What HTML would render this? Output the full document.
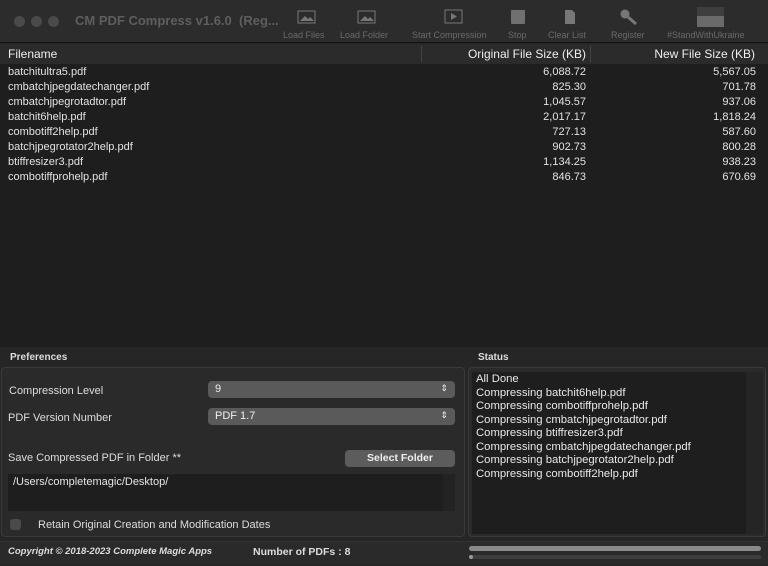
<!DOCTYPE html>
<html><head><style>
*{margin:0;padding:0;box-sizing:border-box}
body{width:768px;height:566px;background:#262626;font-family:"Liberation Sans",sans-serif;color:#dedede;position:relative;overflow:hidden}
.abs{position:absolute}
.title{left:0;top:0;width:768px;height:43px;background:#2c2c2c;border-bottom:1px solid #111}
.dot{width:11px;height:11px;border-radius:50%;background:#4a4a4a;top:16px}
.tb{font-size:9px;color:#6a6a6a;top:30px;text-align:center}
.hdr{left:0;top:44px;width:768px;height:20px;background:#2b2b2b;font-size:12px;color:#eee}
.tbl{left:0;top:64px;width:768px;height:283px;background:#1e1e1e}
.row{position:absolute;left:0;width:768px;height:15px;font-size:11px;color:#e2e2e2}
.row span{position:absolute;top:1px}
.box{border:1px solid #3a3a3a;border-radius:4px;background:#2a2a2a}
.sel{background:#5a5a5a;border-radius:4px;height:17px;font-size:11px;color:#eee;padding:2px 7px}
.lbl{font-size:11px;color:#ddd}
</style></head><body>
<div class="abs title"></div>
<div class="abs dot" style="left:14px"></div>
<div class="abs dot" style="left:31px"></div>
<div class="abs dot" style="left:48px"></div>
<div class="abs" style="left:75px;top:13px;font-size:13px;font-weight:bold;color:#5e5e5e">CM PDF Compress v1.6.0&nbsp; (Reg...</div>
<svg class="abs" style="left:297px;top:10px" width="20" height="15"><rect x="1" y="1" width="17" height="12" fill="none" stroke="#777"/><path d="M3 11 L8 6 L11 9 L13 7 L17 11Z" fill="#777"/></svg>
<svg class="abs" style="left:357px;top:10px" width="20" height="15"><rect x="1" y="1" width="17" height="12" fill="none" stroke="#777"/><path d="M3 11 L8 6 L11 9 L13 7 L17 11Z" fill="#777"/></svg>
<svg class="abs" style="left:444px;top:9px" width="20" height="16"><rect x="1" y="1" width="17" height="13" fill="none" stroke="#777"/><path d="M7 4 L13 7.5 L7 11Z" fill="#777"/></svg>
<div class="abs" style="left:511px;top:10px;width:14px;height:14px;background:#707070;border-radius:1px"></div>
<svg class="abs" style="left:564px;top:9px" width="12" height="16"><path d="M1 1 H8 L11 4 V15 H1Z" fill="#777"/></svg>
<svg class="abs" style="left:619px;top:8px" width="20" height="18"><circle cx="6" cy="6" r="4.5" fill="#777"/><path d="M9 9 L17 16" stroke="#777" stroke-width="3"/></svg>
<div class="abs" style="left:697px;top:7px;width:27px;height:9px;background:#3e3e3e"></div>
<div class="abs" style="left:697px;top:16px;width:27px;height:11px;background:#6a6a6a"></div>
<div class="abs tb" style="left:283px">Load Files</div>
<div class="abs tb" style="left:340px">Load Folder</div>
<div class="abs tb" style="left:412px">Start Compression</div>
<div class="abs tb" style="left:508px">Stop</div>
<div class="abs tb" style="left:548px">Clear List</div>
<div class="abs tb" style="left:611px">Register</div>
<div class="abs tb" style="left:667px">#StandWithUkraine</div>

<div class="abs hdr">
<span class="abs" style="left:8px;top:3px">Filename</span>
<div class="abs" style="left:421px;top:2px;width:1px;height:16px;background:#444"></div>
<span class="abs" style="right:182px;top:3px">Original File Size (KB)</span>
<div class="abs" style="left:590px;top:2px;width:1px;height:16px;background:#444"></div>
<span class="abs" style="right:13px;top:3px">New File Size (KB)</span>
</div>
<div class="abs tbl">
<div class="row" style="top:1px"><span style="left:8px">batchitultra5.pdf</span><span style="right:182px">6,088.72</span><span style="right:12px">5,567.05</span></div>
<div class="row" style="top:16px"><span style="left:8px">cmbatchjpegdatechanger.pdf</span><span style="right:182px">825.30</span><span style="right:12px">701.78</span></div>
<div class="row" style="top:31px"><span style="left:8px">cmbatchjpegrotadtor.pdf</span><span style="right:182px">1,045.57</span><span style="right:12px">937.06</span></div>
<div class="row" style="top:46px"><span style="left:8px">batchit6help.pdf</span><span style="right:182px">2,017.17</span><span style="right:12px">1,818.24</span></div>
<div class="row" style="top:61px"><span style="left:8px">combotiff2help.pdf</span><span style="right:182px">727.13</span><span style="right:12px">587.60</span></div>
<div class="row" style="top:76px"><span style="left:8px">batchjpegrotator2help.pdf</span><span style="right:182px">902.73</span><span style="right:12px">800.28</span></div>
<div class="row" style="top:91px"><span style="left:8px">btiffresizer3.pdf</span><span style="right:182px">1,134.25</span><span style="right:12px">938.23</span></div>
<div class="row" style="top:106px"><span style="left:8px">combotiffprohelp.pdf</span><span style="right:182px">846.73</span><span style="right:12px">670.69</span></div>
</div>

<div class="abs" style="left:10px;top:352px;font-size:10px;font-weight:bold;color:#ddd">Preferences</div>
<div class="abs box" style="left:1px;top:367px;width:464px;height:170px"></div>
<div class="abs lbl" style="left:9px;top:385px">Compression Level</div>
<div class="abs sel" style="left:208px;top:381px;width:247px">9<span style="float:right;font-size:9px">⇕</span></div>
<div class="abs lbl" style="left:8px;top:412px">PDF Version Number</div>
<div class="abs sel" style="left:208px;top:408px;width:247px">PDF 1.7<span style="float:right;font-size:9px">⇕</span></div>
<div class="abs lbl" style="left:8px;top:452px">Save Compressed PDF in Folder **</div>
<div class="abs sel" style="left:345px;top:450px;width:110px;text-align:center;font-weight:bold;font-size:10.5px;background:#5c5c5c">Select Folder</div>
<div class="abs" style="left:8px;top:474px;width:435px;height:37px;background:#1e1e1e"></div>
<div class="abs" style="left:443px;top:474px;width:12px;height:37px;background:#232323"></div>
<div class="abs lbl" style="left:13px;top:476px;color:#e5e5e5">/Users/completemagic/Desktop/</div>
<div class="abs" style="left:10px;top:519px;width:11px;height:11px;background:#4a4a4a;border-radius:3px"></div>
<div class="abs lbl" style="left:38px;top:519px">Retain Original Creation and Modification Dates</div>

<div class="abs" style="left:478px;top:352px;font-size:10px;font-weight:bold;color:#ddd">Status</div>
<div class="abs box" style="left:468px;top:367px;width:298px;height:170px"></div>
<div class="abs" style="left:472px;top:372px;width:274px;height:162px;background:#1e1e1e;font-size:11.3px;line-height:13.5px;color:#e8e8e8;padding:1px 4px">All Done<br>Compressing batchit6help.pdf<br>Compressing combotiffprohelp.pdf<br>Compressing cmbatchjpegrotadtor.pdf<br>Compressing btiffresizer3.pdf<br>Compressing cmbatchjpegdatechanger.pdf<br>Compressing batchjpegrotator2help.pdf<br>Compressing combotiff2help.pdf</div>
<div class="abs" style="left:746px;top:372px;width:17px;height:162px;background:#252525"></div>

<div class="abs" style="left:0;top:541px;width:768px;height:23px;background:#2a2a2a;border-top:1px solid #333"></div>
<div class="abs" style="left:8px;top:546px;font-size:9.5px;font-weight:bold;font-style:italic;color:#ddd">Copyright © 2018-2023 Complete Magic Apps</div>
<div class="abs" style="left:253px;top:546px;font-size:10.5px;font-weight:bold;color:#ddd">Number of PDFs : 8</div>
<div class="abs" style="left:469px;top:546px;width:292px;height:5px;background:#8a8a8a;border-radius:3px"></div>
<div class="abs" style="left:469px;top:555px;width:292px;height:4px;background:#3e3e3e;border-radius:3px"></div>
<div class="abs" style="left:469px;top:555px;width:4px;height:4px;background:#999;border-radius:2px"></div>
</body></html>
